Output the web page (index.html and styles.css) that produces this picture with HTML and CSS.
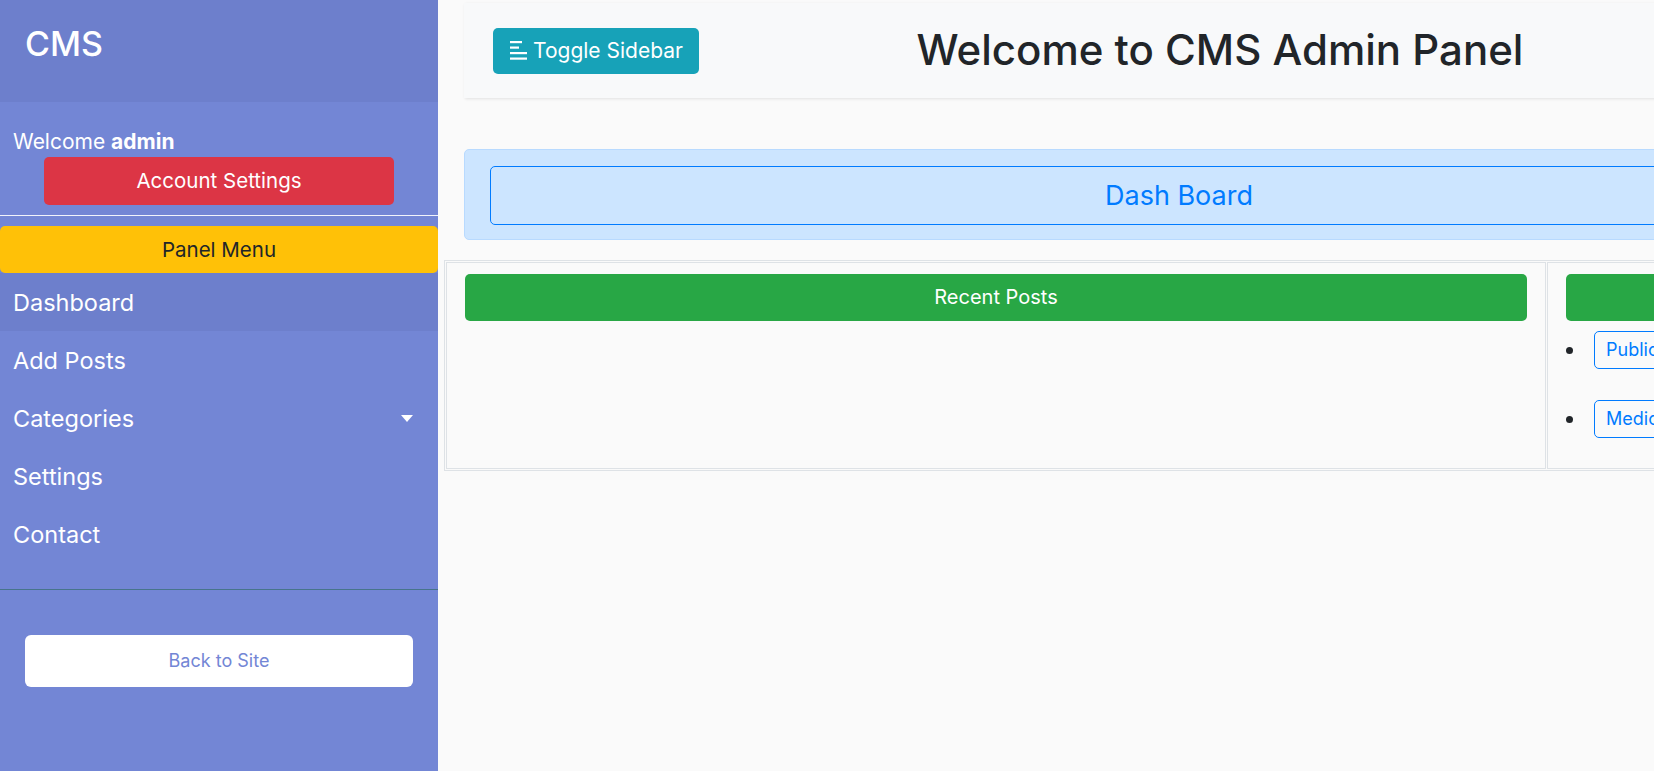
FILE: index.html
```html
<!DOCTYPE html>
<html lang="en">
<head>
    <meta charset="UTF-8">
    <meta name="viewport" content="width=device-width, initial-scale=1.0">
    <title>CMS Admin Panel</title>
    <link rel="stylesheet" href="styles.css">
</head>
<body>
    <div class="wrapper">
        <nav class="sidebar">
            <div class="sidebar-header">
                <h3>CMS</h3>
            </div>

            <div class="components">
                <p class="welcome">Welcome <strong>admin</strong></p>
                <a href="#" class="btn-account">Account Settings</a>
                <div class="sep"></div>
                <div class="panel-menu">Panel Menu</div>
                <ul class="menu">
                    <li class="active"><a href="#">Dashboard</a></li>
                    <li><a href="#">Add Posts</a></li>
                    <li><a href="#" class="dropdown">Categories <span class="caret"></span></a></li>
                    <li><a href="#">Settings</a></li>
                    <li><a href="#">Contact</a></li>
                </ul>
            </div>

            <div class="ctas">
                <a href="#" class="back">Back to Site</a>
            </div>
        </nav>

        <div class="content">
            <div class="topbar">
                <button type="button" class="btn-toggle">
                    <svg width="17" height="19" viewBox="0 0 17 19">
                        <rect x="0" y="0" width="12" height="2.2" fill="#fff"/>
                        <rect x="0" y="5.5" width="9" height="2.2" fill="#fff"/>
                        <rect x="0" y="11" width="17" height="2.2" fill="#fff"/>
                        <rect x="0" y="16.5" width="17" height="2.2" fill="#fff"/>
                    </svg>
                    <span>Toggle Sidebar</span>
                </button>
                <h1>Welcome to CMS Admin Panel</h1>
            </div>

            <div class="alert">
                <div class="alert-inner">Dash Board</div>
            </div>

            <table class="panels">
                <tr>
                    <td class="col-main">
                        <div class="panel-title">Recent Posts</div>
                    </td>
                    <td>
                        <div class="panel-title">Categories</div>
                        <ul class="cat-list">
                            <li><a href="#" class="btn-outline">Public Health</a></li>
                            <li><a href="#" class="btn-outline">Medical</a></li>
                        </ul>
                    </td>
                </tr>
            </table>
        </div>
    </div>
</body>
</html>
```

FILE: styles.css
```css
* {
    box-sizing: border-box;
}

body {
    margin: 0;
    font-family: "Inter", "Open Sans", sans-serif;
    background: #fafafa;
    color: #212529;
    overflow: hidden;
}

a {
    text-decoration: none;
}

.wrapper {
    display: flex;
    align-items: stretch;
    width: max-content;
    min-height: 100vh;
}

/* sidebar */

.sidebar {
    width: 438px;
    flex-shrink: 0;
    background: #7386d5;
    color: #fff;
}

.sidebar-header {
    height: 102px;
    padding: 24px 25px 0;
    background: #6d7fcc;
}

.sidebar-header h3 {
    margin: 0;
    font-size: 34px;
    font-weight: 500;
    line-height: 1.2;
}

.components {
    padding-top: 25px;
}

.welcome {
    margin: 0;
    padding: 0 13px;
    font-size: 21px;
    font-weight: 400;
    line-height: 30px;
}

.welcome strong {
    font-weight: 700;
}

.btn-account {
    display: block;
    width: 350px;
    height: 48px;
    margin-left: 44px;
    line-height: 48px;
    text-align: center;
    background: #dc3545;
    color: #fff;
    border-radius: 5px;
    font-size: 20.5px;
}

.sep {
    height: 1px;
    margin: 10px 0;
    background: rgba(255, 255, 255, 0.9);
}

.panel-menu {
    height: 47px;
    line-height: 47px;
    text-align: center;
    background: #ffc107;
    color: #212529;
    border-radius: 5px;
    font-size: 20.5px;
}

.menu {
    list-style: none;
    margin: 0;
    padding: 0 0 26px;
    border-bottom: 1px solid #47748b;
}

.menu a {
    display: flex;
    align-items: center;
    height: 58px;
    padding: 0 13px;
    color: #fff;
    font-size: 23.5px;
}

.menu li.active a {
    background: #6d7fcc;
}

.caret {
    margin-left: auto;
    margin-right: 12px;
    border-top: 7px solid #fff;
    border-left: 6.5px solid transparent;
    border-right: 6.5px solid transparent;
}

.ctas {
    padding: 45px 25px;
}

.back {
    display: block;
    height: 52px;
    line-height: 52px;
    text-align: center;
    background: #fff;
    color: #7386d5;
    border-radius: 6px;
    font-size: 18px;
}

/* content */

.content {
    width: 1482px;
    flex-shrink: 0;
    padding: 3px 26px 0;
}

.topbar {
    display: flex;
    align-items: center;
    height: 95px;
    padding: 0 153px 0 29px;
    margin-bottom: 51px;
    background: #f8f9fa;
    box-shadow: 1px 1px 3px rgba(0, 0, 0, 0.1);
}

.btn-toggle {
    display: flex;
    align-items: center;
    gap: 6px;
    width: 206px;
    height: 46px;
    padding: 0 0 0 17px;
    border: none;
    border-radius: 5px;
    background: #17a2b8;
    color: #fff;
    font-family: inherit;
    font-size: 21px;
    white-space: nowrap;
}

.topbar h1 {
    margin: 0 auto;
    font-size: 42px;
    font-weight: 500;
    line-height: 1.2;
    color: #212529;
}

.alert {
    padding: 16px 25px 14px;
    margin-bottom: 20px;
    background: #cce5ff;
    border: 1px solid #b8daff;
    border-radius: 5px;
}

.alert-inner {
    display: flex;
    align-items: center;
    justify-content: center;
    height: 59px;
    border: 1px solid #007bff;
    border-radius: 5px;
    color: #007bff;
    font-size: 27px;
}

.panels {
    width: 1470px;
    margin-left: -20px;
    table-layout: fixed;
    border-collapse: separate;
    border-spacing: 1px;
    border: 1px solid #dee2e6;
}

.panels td {
    padding: 11px 18px 30px;
    vertical-align: top;
    border: 1px solid #dee2e6;
}

.panels td.col-main {
    width: 1100px;
}

.panel-title {
    height: 47px;
    line-height: 47px;
    text-align: center;
    background: #28a745;
    color: #fff;
    border-radius: 5px;
    font-size: 20px;
}

.cat-list {
    list-style: none;
    margin: 0;
    padding: 10px 0 0;
}

.cat-list li {
    display: flex;
    align-items: center;
    margin-bottom: 31px;
}

.cat-list li:last-child {
    margin-bottom: 0;
}

.cat-list li::before {
    content: "";
    width: 7px;
    height: 7px;
    margin-right: 21px;
    border-radius: 50%;
    background: #212529;
}

.btn-outline {
    display: inline-block;
    height: 38px;
    line-height: 36px;
    padding: 0 11px;
    border: 1px solid #007bff;
    border-radius: 5px;
    color: #007bff;
    font-size: 18px;
    white-space: nowrap;
}
```
